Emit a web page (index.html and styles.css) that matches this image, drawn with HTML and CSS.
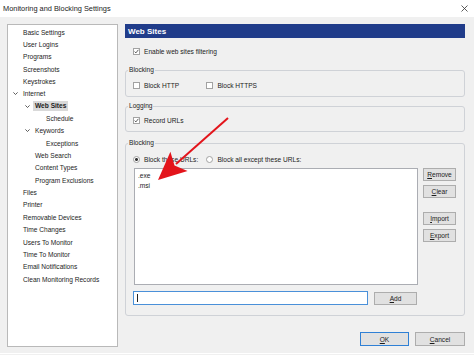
FILE: index.html
```html
<!DOCTYPE html>
<html lang="en">
	<head>
		<meta charset="UTF-8">
		<title>Monitoring and Blocking Settings</title>
		<link rel="stylesheet" href="styles.css">
	</head>
	<body>
		<div class="titlebar">
			<span class="title">Monitoring and Blocking Settings</span>
			<svg class="close" width="7" height="7" viewBox="0 0 7 7"><path d="M0.5 0.5L6.5 6.5M6.5 0.5L0.5 6.5" stroke="#333" stroke-width="0.8"/></svg>
		</div>
		<div class="main">
			<!-- 左边的树形菜单 -->
			<div class="tree">
				<div class="node">Basic Settings</div>
				<div class="node">User Logins</div>
				<div class="node">Programs</div>
				<div class="node">Screenshots</div>
				<div class="node">Keystrokes</div>
				<div class="node"><svg class="chev" width="5" height="3" viewBox="0 0 5 3"><polyline points="0.4,0.4 2.5,2.5 4.6,0.4" fill="none" stroke="#333" stroke-width="0.8"/></svg>Internet</div>
				<div class="node l1"><svg class="chev" width="5" height="3" viewBox="0 0 5 3"><polyline points="0.4,0.4 2.5,2.5 4.6,0.4" fill="none" stroke="#333" stroke-width="0.8"/></svg><span class="selected">Web Sites</span></div>
				<div class="node l2">Schedule</div>
				<div class="node l1"><svg class="chev" width="5" height="3" viewBox="0 0 5 3"><polyline points="0.4,0.4 2.5,2.5 4.6,0.4" fill="none" stroke="#333" stroke-width="0.8"/></svg>Keywords</div>
				<div class="node l2">Exceptions</div>
				<div class="node l1">Web Search</div>
				<div class="node l1">Content Types</div>
				<div class="node l1">Program Exclusions</div>
				<div class="node">Files</div>
				<div class="node">Printer</div>
				<div class="node">Removable Devices</div>
				<div class="node">Time Changes</div>
				<div class="node">Users To Monitor</div>
				<div class="node">Time To Monitor</div>
				<div class="node">Email Notifications</div>
				<div class="node">Clean Monitoring Records</div>
			</div>
			<!-- 右边的设置面板 -->
			<div class="panel">
				<div class="header">Web Sites</div>
				<div class="enable check">
					<span class="box"><svg width="5" height="5" viewBox="0 0 5 5"><polyline points="0.6,2.6 1.9,3.9 4.4,0.8" fill="none" stroke="#333" stroke-width="0.8"/></svg></span>
					Enable web sites filtering
				</div>
				<div class="group first">
					<div class="group-title">Blocking</div>
					<div class="row">
						<div class="check wide"><span class="box"></span>Block HTTP</div>
						<div class="check"><span class="box"></span>Block HTTPS</div>
					</div>
				</div>
				<div class="group logging">
					<div class="group-title">Logging</div>
					<div class="row tight">
						<div class="check"><span class="box"><svg width="5" height="5" viewBox="0 0 5 5"><polyline points="0.6,2.6 1.9,3.9 4.4,0.8" fill="none" stroke="#333" stroke-width="0.8"/></svg></span>Record URLs</div>
					</div>
				</div>
				<div class="group urls">
					<div class="group-title">Blocking</div>
					<div class="row radios">
						<div class="check wide"><span class="radio on"></span>Block these URLs:</div>
						<div class="check"><span class="radio"></span>Block all except these URLs:</div>
					</div>
					<div class="list-area">
						<div class="listbox">
							<div>.exe</div>
							<div>.msi</div>
						</div>
						<div class="side">
							<div class="btn"><u>R</u>emove</div>
							<div class="btn"><u>C</u>lear</div>
							<div class="btn gap"><u>I</u>mport</div>
							<div class="btn"><u>E</u>xport</div>
						</div>
					</div>
					<div class="add-row">
						<div class="input"><span class="caret"></span></div>
						<div class="btn add"><u>A</u>dd</div>
					</div>
				</div>
				<div class="footer">
					<div class="btn ok"><u>O</u>K</div>
					<div class="btn cancel"><u>C</u>ancel</div>
				</div>
			</div>
		</div>
		<!-- 截图上的红色箭头 -->
		<svg class="annot" width="474" height="355" viewBox="0 0 474 355">
			<line x1="228" y1="118" x2="176" y2="164" stroke="#e3141b" stroke-width="2"/>
			<polygon points="158,180 170.4,151.7 174.5,165.4 187.6,171.1" fill="#e3141b"/>
		</svg>
	</body>
</html>
```

FILE: styles.css
```css
* {
    margin: 0;
    padding: 0;
    box-sizing: border-box;
}
body {
    width: 474px;
    height: 355px;
    overflow: hidden;
    position: relative;
    background: #f0f0f0;
    font-family: "Liberation Sans", Arial, sans-serif;
    font-size: 6.6px;
    color: #1c1c1c;
}
.titlebar {
    height: 17px;
    background: #fff;
    display: flex;
    align-items: center;
    justify-content: space-between;
    padding: 0 6px 1px 3px;
}
.titlebar .title {
    font-size: 7.4px;
    color: #222;
}
.main {
    display: flex;
    gap: 7px;
    padding: 7px 9px 0 7px;
    height: 337px;
    border-bottom: 1px solid #fff;
}
.tree {
    width: 111px;
    height: 323px;
    background: #fff;
    border: 1px solid #b9b9b9;
    padding-top: 1px;
}
.tree .node {
    height: 12.35px;
    display: flex;
    align-items: center;
    padding-left: 15px;
    white-space: nowrap;
}
.tree .l1 {
    padding-left: 27px;
}
.tree .l2 {
    padding-left: 38px;
}
.tree .chev {
    margin-left: -10px;
    margin-right: 5px;
}
.tree .selected {
    font-weight: bold;
    background: #d9d9d9;
    line-height: 10px;
    padding: 0 2px;
    margin-left: -2px;
}
.panel {
    width: 340px;
    display: flex;
    flex-direction: column;
}
.header {
    height: 14px;
    background: #203c8a;
    color: #fff;
    font-weight: bold;
    font-size: 8px;
    padding-left: 3px;
    display: flex;
    align-items: center;
}
.check {
    display: flex;
    align-items: center;
    gap: 4px;
    white-space: nowrap;
}
.check.wide {
    width: 73.4px;
}
.enable {
    margin-top: 7px;
    padding-left: 8px;
    height: 12px;
}
.box {
    width: 7px;
    height: 7px;
    border: 1px solid #a2a2a2;
    background: #fff;
    display: flex;
    align-items: center;
    justify-content: center;
    flex-shrink: 0;
}
.radio {
    width: 7px;
    height: 7px;
    border-radius: 50%;
    border: 1px solid #a2a2a2;
    background: #fff;
    flex-shrink: 0;
}
.radio.on {
    background: radial-gradient(circle, #333 1.2px, #fff 1.7px);
}
.group {
    border: 1px solid #cfd2d7;
    border-radius: 3px;
    padding: 0 8px 5px 7px;
    margin-top: 9px;
}
.group.first {
    margin-top: 13px;
}
.group.urls {
    margin-top: 11px;
    padding-bottom: 10px;
}
.group-title {
    display: table;
    margin: -6px 0 0 -5px;
    padding: 0 1px;
    line-height: 10px;
    background: #f0f0f0;
}
.row {
    display: flex;
    align-items: center;
    height: 12px;
    margin-top: 4px;
}
.row.tight {
    margin-top: 3px;
}
.row.radios {
    margin-top: 5px;
}
.list-area {
    display: flex;
    height: 117px;
    margin-top: 3px;
}
.listbox {
    flex: 1;
    margin-left: 1px;
    background: #fff;
    border: 1px solid #abadb3;
    padding: 2px 0 0 3px;
    line-height: 10px;
}
.side {
    width: 33px;
    margin-left: 5px;
    display: flex;
    flex-direction: column;
}
.btn {
    height: 13px;
    border: 1px solid #adadad;
    background: #e1e1e1;
    display: flex;
    align-items: center;
    justify-content: center;
    white-space: nowrap;
}
.side .btn + .btn {
    margin-top: 4px;
}
.side .btn.gap {
    margin-top: 14px;
}
.add-row {
    display: flex;
    align-items: flex-end;
    height: 14px;
    margin-top: 6px;
}
.input {
    width: 235px;
    height: 14px;
    border: 1px solid #4a90d9;
    background: #fff;
    display: flex;
    align-items: center;
    padding-left: 3px;
}
.caret {
    width: 1px;
    height: 8px;
    background: #222;
}
.btn.add {
    width: 43px;
    margin-left: 6px;
}
.footer {
    display: flex;
    justify-content: flex-end;
    gap: 6px;
    margin-top: 16px;
}
.footer .btn {
    height: 14px;
}
.btn.ok {
    width: 49px;
    border-color: #2f80d5;
}
.btn.cancel {
    width: 50px;
}
.annot {
    position: absolute;
    left: 0;
    top: 0;
    pointer-events: none;
}
```
